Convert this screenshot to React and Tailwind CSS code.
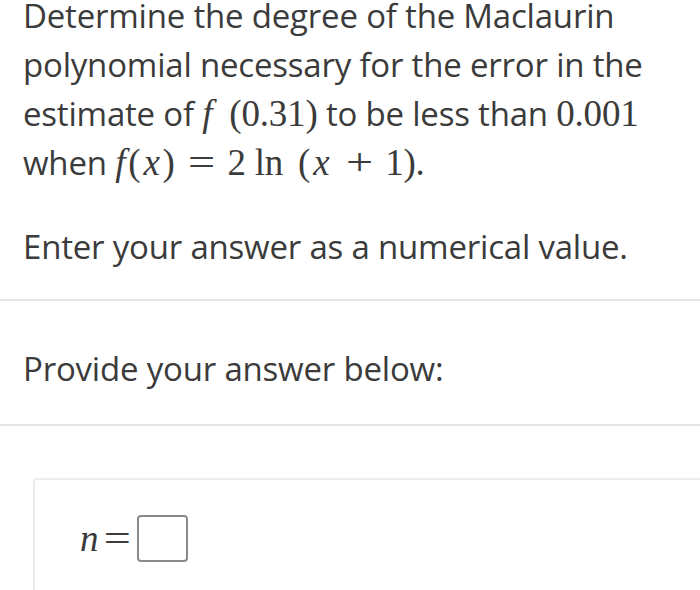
import React from 'react';

const sans = { fontFamily: '"Open Sans", "Liberation Sans", sans-serif' };
const serif = { fontFamily: '"Liberation Serif", "DejaVu Serif", serif' };

function M({ children }) {
  return (
    <span className="text-[37px] leading-none" style={serif}>
      {children}
    </span>
  );
}

function I({ children }) {
  return <i className="italic">{children}</i>;
}

// spacing helpers like KaTeX's thin/medium/thick spaces
function Sp({ w }) {
  return <span className="inline-block" style={{ width: w }} />;
}

function Op({ children }) {
  return <span className="inline-block scale-x-[1.3]">{children}</span>;
}

export default function App() {
  return (
    <div className="w-[700px] h-[590px] overflow-hidden bg-white text-[#3b3b3b]" style={sans}>
      <div className="pl-[23px] pr-2">
        <p className="text-[33px] leading-[49px] -mt-[9px] tracking-[-0.2px]">
          Determine the degree of the Maclaurin polynomial necessary for the error in the estimate of{' '}
          <M>
            <I>f</I>
            <Sp w={17} />
            (0.31)
          </M>{' '}
          to be less than <M>0.001</M> when{' '}
          <M>
            <I>f</I>
            <Sp w={3} />(<Sp w={3} />
            <I>x</I>
            <Sp w={3} />)<Sp w={16} />
            <Op>=</Op>
            <Sp w={16} />2<Sp w={9} />ln<Sp w={15} />(<Sp w={3} />
            <I>x</I>
            <Sp w={20} />
            <Op>+</Op>
            <Sp w={15} />1).
          </M>
        </p>
        <p className="text-[33px] leading-[49px] mt-[35px] tracking-[-0.2px]">Enter your answer as a numerical value.</p>
      </div>
      <div className="mt-[28px] border-t-2 border-[#e4e4e4]" />
      <div className="pl-[23px] h-[123px] flex items-center">
        <p className="text-[33px] leading-[49px] mt-[12px] tracking-[-0.2px]">Provide your answer below:</p>
      </div>
      <div className="border-t-2 border-[#e4e4e4]" />
      <div className="ml-[33px] mt-[52px] h-[200px] border-2 border-[#ececec] rounded-tl-[4px] border-r-0 border-b-0 flex items-start pt-[35px] pl-[45px]">
        <div className="flex items-center" style={serif}>
          <span className="text-[37px] italic leading-none">n</span>
          <span className="text-[37px] leading-none ml-[8px] mr-[10px] inline-block scale-x-[1.3]">=</span>
          <div className="w-[51px] h-[47px] border-2 border-[#8a8a8a] rounded-[4px]" />
        </div>
      </div>
    </div>
  );
}
